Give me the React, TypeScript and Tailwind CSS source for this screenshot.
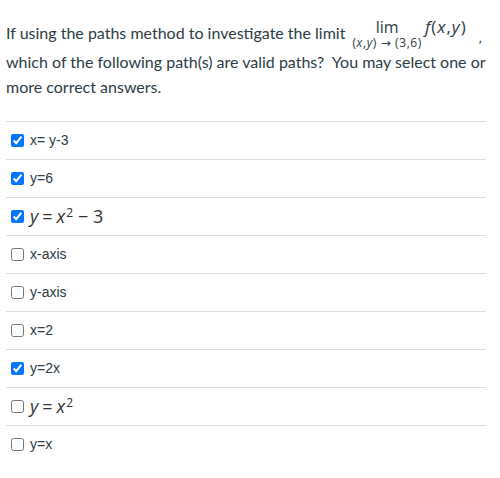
import React from "react";

type Option = { label: React.ReactNode; checked: boolean };

const mathFont = { fontFamily: "'Open Sans', 'DejaVu Sans', sans-serif" };

const MathYX = ({ tail }: { tail?: string }) => (
  <span className="text-[18px] text-[#333]" style={mathFont}>
    <i>y</i>
    <span className="mx-[4px]">=</span>
    <i>x</i>
    <sup className="text-[12px] ml-[1px]">2</sup>
    {tail && <span className="ml-[5px]">{tail}</span>}
  </span>
);

const options: Option[] = [
  { label: "x= y-3", checked: true },
  { label: "y=6", checked: true },
  { label: <MathYX tail="− 3" />, checked: true },
  { label: "x-axis", checked: false },
  { label: "y-axis", checked: false },
  { label: "x=2", checked: false },
  { label: "y=2x", checked: true },
  { label: <MathYX />, checked: false },
  { label: "y=x", checked: false },
];

export default function App() {
  return (
    <div className="w-[500px] h-[478px] bg-white text-[#2d3b45] overflow-hidden" style={{ fontFamily: "Lato, 'Open Sans', sans-serif" }}>
      <div className="px-[6px] pt-[16px] text-[16px] leading-[25px]">
        <div className="whitespace-nowrap">
          If using the paths method to investigate the limit
          <span className="inline-flex items-baseline align-[6px] ml-[7px]" style={mathFont}>
            <span className="inline-flex flex-col items-center">
              <span className="text-[16px] leading-[17px]">lim</span>
              <span className="text-[12px] leading-[13px] tracking-[0.6px]">(<i>x</i>,<i>y</i>) → (3,6)</span>
            </span>
            <span className="text-[17px] leading-[18px] ml-[3px] tracking-[1px]">
              <i>f</i>(<i>x</i>,<i>y</i>)
            </span>
            <span className="ml-[12px] text-[13px] relative top-[9px]">,</span>
          </span>
        </div>
        <p>
          which of the following path(s) are valid paths?&nbsp; You may select one or more correct answers.
        </p>
      </div>

      <div className="ml-[6px] w-[480px] mt-[22px]">
        {options.map((o, i) => (
          <label
            key={i}
            className="flex items-center h-[38px] border-t border-[#dcdcdc] pl-[5px] gap-[6px]"
          >
            <input type="checkbox" defaultChecked={o.checked} className="w-[13px] h-[13px] m-0" />
            <span className="text-[14px] text-[#2d3b45]" style={{ fontFamily: "'Liberation Sans', Arial, sans-serif" }}>
              {o.label}
            </span>
          </label>
        ))}
      </div>
    </div>
  );
}
